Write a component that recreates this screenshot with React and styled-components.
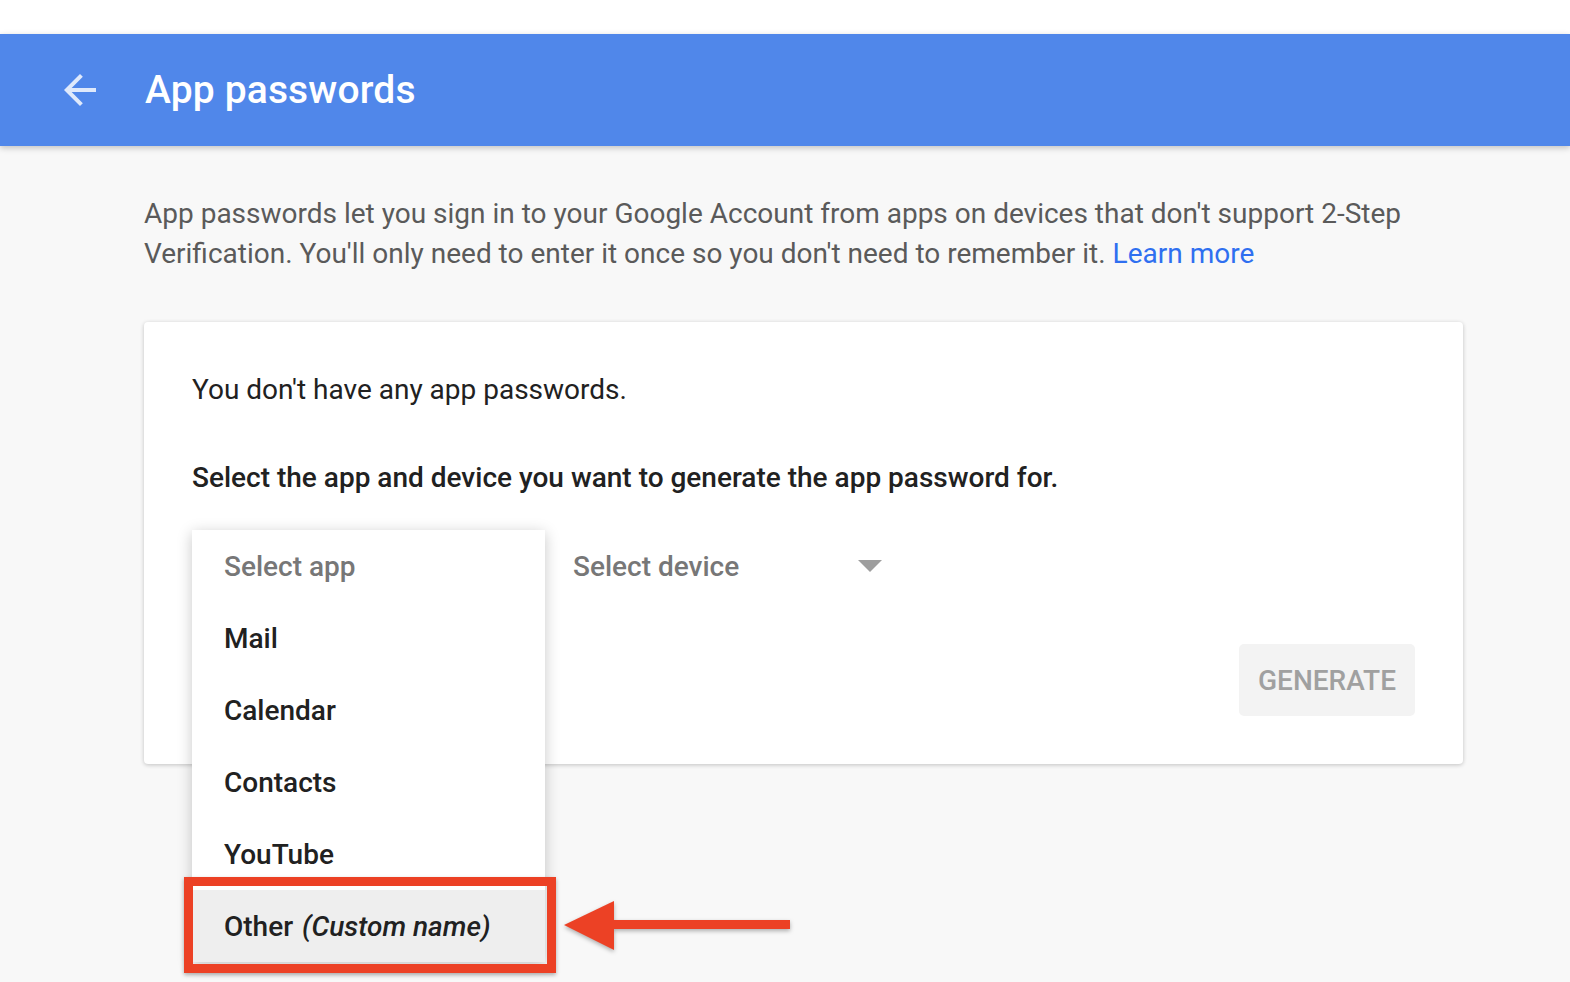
import styled, { createGlobalStyle } from 'styled-components'

const GlobalStyle = createGlobalStyle`
  html, body {
    margin: 0;
    min-height: 100%;
    background: #f8f8f8;
  }

  body {
    font-family: Roboto, "Noto Sans", sans-serif;
    -webkit-font-smoothing: antialiased;
  }
`

const Page = styled.div`
  min-height: 982px;
  background: #f8f8f8;
`

const TopStrip = styled.div`
  height: 34px;
  background: #ffffff;
`

const Header = styled.header`
  display: flex;
  align-items: center;
  height: 112px;
  padding-left: 56px;
  background: #5087ea;
  box-shadow: 0 2px 6px rgba(0, 0, 0, 0.22);
  position: relative;
`

const BackButton = styled.button`
  display: flex;
  width: 48px;
  height: 48px;
  padding: 0;
  border: none;
  background: none;
  color: rgba(255, 255, 255, 0.82);
`

const Title = styled.h1`
  margin: 0 0 0 41px;
  font-size: 39px;
  font-weight: 500;
  color: #ffffff;
  letter-spacing: 0.15px;
`

const Main = styled.main`
  width: 1319px;
  margin-left: 144px;
  padding-top: 48px;
`

const Intro = styled.p`
  margin: 0;
  font-size: 28px;
  line-height: 40px;
  color: #5a5a5a;
`

const Link = styled.a`
  color: #2f6ff0;
  text-decoration: none;
`

const Card = styled.section`
  margin-top: 48px;
  padding: 48px;
  background: #ffffff;
  border-radius: 4px;
  box-shadow: 0 1px 4px rgba(0, 0, 0, 0.22);
`

const Text = styled.p`
  margin: 0 0 ${(p) => (p.$strong ? 32 : 48)}px;
  font-size: 28px;
  line-height: 40px;
  font-weight: ${(p) => (p.$strong ? 500 : 400)};
  color: #212121;
`

const SelectRow = styled.div`
  display: flex;
  align-items: center;
  gap: 28px;
  height: 72px;
`

const AppSelect = styled.div`
  position: relative;
  width: 353px;
  height: 72px;
`

const Menu = styled.ul`
  position: absolute;
  top: 0;
  left: 0;
  width: 353px;
  margin: 0;
  padding: 0;
  list-style: none;
  background: #ffffff;
  box-shadow: 0 3px 14px rgba(0, 0, 0, 0.22);
  z-index: 2;
`

const MenuItem = styled.li`
  position: relative;
  display: flex;
  align-items: center;
  height: 72px;
  padding-left: 32px;
  font-size: 28px;
  font-weight: 500;
  color: ${(p) => (p.$placeholder ? '#777777' : '#212121')};
  background: ${(p) => (p.$active ? '#eeeeee' : '#ffffff')};
`

const Hint = styled.em`
  margin-left: 9px;
  font-style: italic;
  font-weight: 500;
`

const Highlight = styled.span`
  position: absolute;
  top: -13px;
  left: -8px;
  right: -11px;
  bottom: -11px;
  border: 9px solid #ec4125;
  box-shadow: 0 2px 4px rgba(0, 0, 0, 0.3);
  pointer-events: none;
`

const Pointer = styled.svg`
  position: absolute;
  top: 10px;
  left: 372px;
  overflow: visible;
  filter: drop-shadow(0 2px 2px rgba(0, 0, 0, 0.3));
`

const DeviceSelect = styled.div`
  display: flex;
  align-items: center;
  justify-content: space-between;
  width: 309px;
  font-size: 28px;
  font-weight: 500;
  color: #777777;
`

const Caret = styled.span`
  width: 0;
  height: 0;
  border-left: 12px solid transparent;
  border-right: 12px solid transparent;
  border-top: 12px solid #9e9e9e;
`

const Actions = styled.div`
  display: flex;
  justify-content: flex-end;
  margin-top: 42px;
`

const GenerateButton = styled.button`
  width: 176px;
  height: 72px;
  border: none;
  border-radius: 5px;
  background: #f3f3f3;
  font-family: inherit;
  font-size: 28px;
  font-weight: 500;
  color: #a0a0a0;
`

const apps = ['Mail', 'Calendar', 'Contacts', 'YouTube']

export default function App() {
  return (
    <Page>
      <GlobalStyle />
      <TopStrip />
      <Header>
        <BackButton aria-label="Back">
          <svg width="48" height="48" viewBox="0 0 24 24" fill="currentColor">
            <path d="M20 11H7.83l5.59-5.59L12 4l-8 8 8 8 1.41-1.41L7.83 13H20v-2z" />
          </svg>
        </BackButton>
        <Title>App passwords</Title>
      </Header>

      <Main>
        <Intro>
          App passwords let you sign in to your Google Account from apps on devices that don't support 2-Step
          Verification. You'll only need to enter it once so you don't need to remember it.{' '}
          <Link href="#">Learn more</Link>
        </Intro>

        <Card>
          <Text>You don't have any app passwords.</Text>
          <Text $strong>Select the app and device you want to generate the app password for.</Text>

          <SelectRow>
            <AppSelect>
              <Menu>
                <MenuItem $placeholder>Select app</MenuItem>
                {apps.map((app) => (
                  <MenuItem key={app}>{app}</MenuItem>
                ))}
                <MenuItem $active>
                  Other <Hint>(Custom name)</Hint>
                  <Highlight />
                  <Pointer width="226" height="50" viewBox="0 0 226 50">
                    <polygon points="0,25 50,1 50,50" fill="#ec4125" />
                    <rect x="48" y="20" width="178" height="9" fill="#ec4125" />
                  </Pointer>
                </MenuItem>
              </Menu>
            </AppSelect>
            <DeviceSelect>
              Select device
              <Caret />
            </DeviceSelect>
          </SelectRow>

          <Actions>
            <GenerateButton disabled>GENERATE</GenerateButton>
          </Actions>
        </Card>
      </Main>
    </Page>
  )
}
